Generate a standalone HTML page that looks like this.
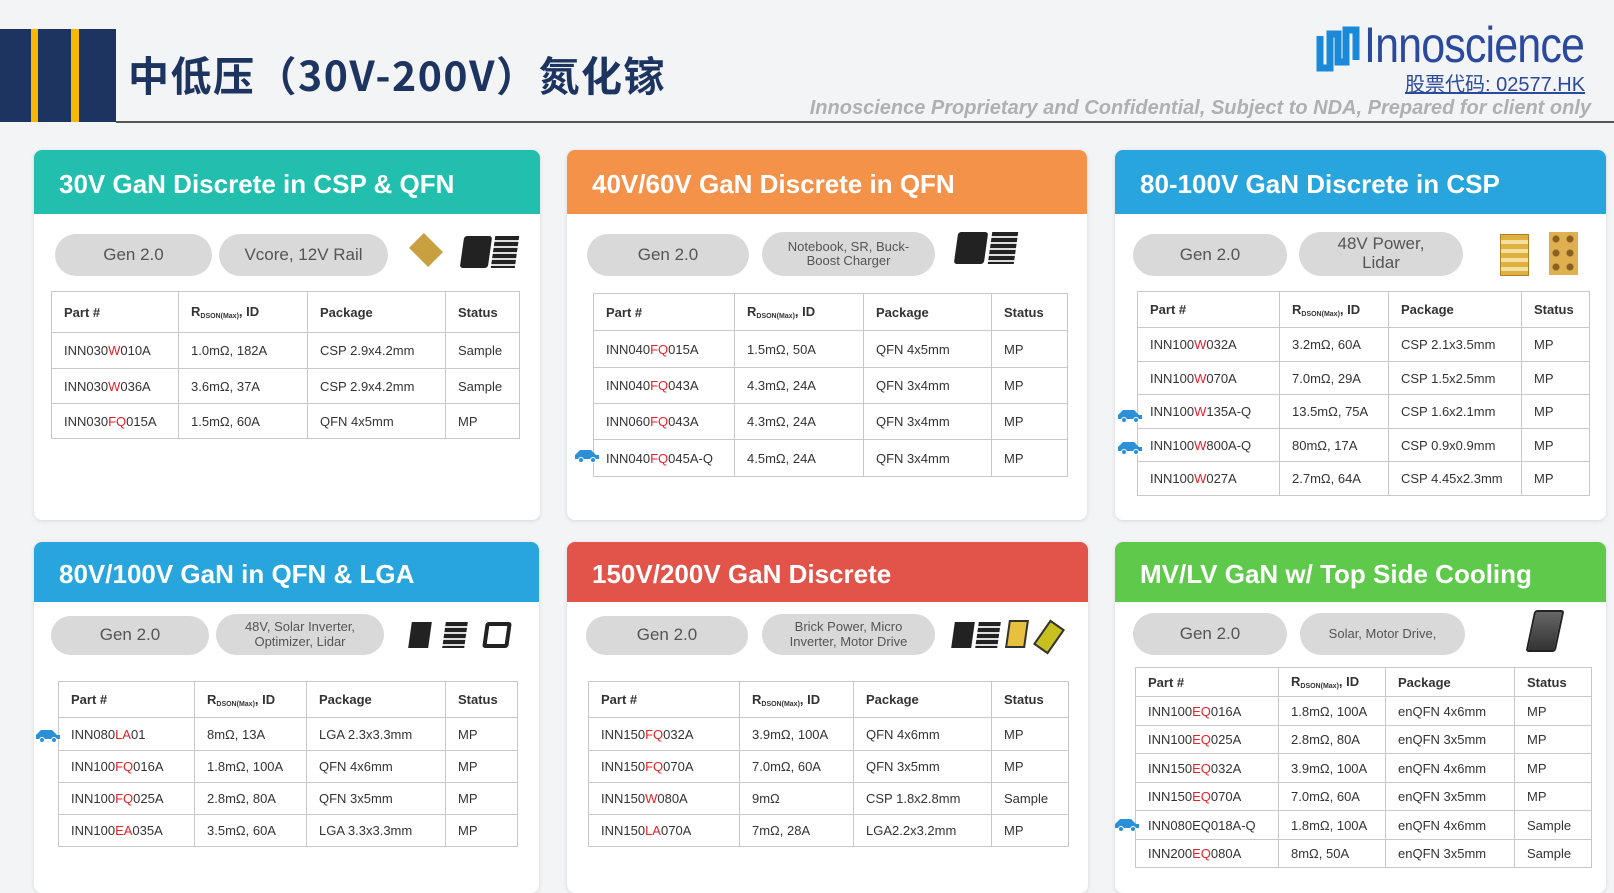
<!DOCTYPE html>
<html><head><meta charset="utf-8"><style>
*{margin:0;padding:0;box-sizing:border-box}
body{width:1614px;height:893px;background:#f3f4f6;position:relative;overflow:hidden;font-family:"Liberation Sans","Noto Sans CJK SC",sans-serif}
.a{position:absolute}
.card{position:absolute;background:#fff;border-radius:8px;box-shadow:0 1px 4px rgba(0,0,0,.12);overflow:hidden}
.hd{height:64px;color:#fff;font-weight:bold;font-size:26px;padding:19px 0 0 25px;white-space:nowrap}
.pill{position:absolute;background:#d9d9d9;border-radius:22px;color:#555;display:flex;align-items:center;justify-content:center;text-align:center;font-size:17px;line-height:1.1}
.pill.s{font-size:13px}
table{position:absolute;border-collapse:collapse;font-size:13px;color:#333;background:#fff}
td{border:1.5px solid #c8c8c8;padding-left:12px;white-space:nowrap}
tr:first-child td{font-weight:bold;font-size:13px}
.r{color:#e8202a}
sub{font-size:7px;vertical-align:-2px;font-weight:bold}
.car{position:absolute;width:26px;height:16px}
</style></head><body>
<!-- header -->
<div class="a" style="left:0;top:29px;width:116px;height:93px;background:#1d3461"></div>
<div class="a" style="left:31px;top:29px;width:7px;height:93px;background:#f6b800"></div>
<div class="a" style="left:71px;top:29px;width:8px;height:93px;background:#f6b800"></div>
<div class="a" style="left:116px;top:121px;width:1498px;height:2px;background:#555"></div>
<div class="a" style="left:128px;top:43px;font-size:41px;font-weight:bold;color:#1d3461;font-family:'Noto Sans CJK SC','Liberation Sans',sans-serif;letter-spacing:1.5px;white-space:nowrap">中低压（30V-200V）氮化镓</div>
<svg class="a" style="left:1316px;top:24px" width="44" height="48" viewBox="0 0 44 48"><path d="M4 12 V44 H14 V10 H22 V38 H30 V6 H40 V36" fill="none" stroke="#1a8ad8" stroke-width="7"/></svg>
<div class="a" style="left:1364px;top:16px;font-size:50px;color:#2b4a9e;letter-spacing:-1px;white-space:nowrap;transform:scaleX(0.86);transform-origin:left top">Innoscience</div>
<div class="a" style="left:1405px;top:68px;font-size:20px;color:#2b4a9e;text-decoration:underline;white-space:nowrap">股票代码: 02577.HK</div>
<div class="a" style="right:23px;top:97px;font-size:20px;color:#b0b0b0;font-style:italic;font-weight:bold;white-space:nowrap">Innoscience Proprietary and Confidential, Subject to NDA, Prepared for client only</div>

<!-- card 1 -->
<div class="card" style="left:34px;top:150px;width:506px;height:370px"><div class="hd" style="background:#22bfae">30V GaN Discrete in CSP &amp; QFN</div></div>
<div class="pill" style="left:55px;top:234px;width:157px;height:42px">Gen 2.0</div>
<div class="pill" style="left:219px;top:234px;width:169px;height:42px">Vcore, 12V Rail</div>
<div class="a" style="left:408px;top:236px;width:36px;height:28px;background:#c8a040;transform:rotate(45deg) scale(.75)"></div>
<div class="a" style="left:462px;top:236px;width:28px;height:32px;background:#222;transform:skewX(-8deg);border-radius:3px"></div>
<div class="a" style="left:493px;top:236px;width:24px;height:32px;background:repeating-linear-gradient(#222 0 4px,#ddd 4px 6px);transform:skewX(-8deg)"></div>
<table style="left:51px;top:291px;width:469px">
<tr style="height:41px"><td style="width:127px">Part #</td><td style="width:129px">R<sub>DSON(Max)</sub>, ID</td><td style="width:138px">Package</td><td>Status</td></tr>
<tr style="height:36px"><td>INN030<span class="r">W</span>010A</td><td>1.0mΩ, 182A</td><td>CSP 2.9x4.2mm</td><td>Sample</td></tr>
<tr style="height:35px"><td>INN030<span class="r">W</span>036A</td><td>3.6mΩ, 37A</td><td>CSP 2.9x4.2mm</td><td>Sample</td></tr>
<tr style="height:35px"><td>INN030<span class="r">FQ</span>015A</td><td>1.5mΩ, 60A</td><td>QFN 4x5mm</td><td>MP</td></tr>
</table>

<!-- card 2 -->
<div class="card" style="left:567px;top:150px;width:520px;height:370px"><div class="hd" style="background:#f4924a">40V/60V GaN Discrete in QFN</div></div>
<div class="pill" style="left:587px;top:234px;width:162px;height:42px">Gen 2.0</div>
<div class="pill s" style="left:762px;top:232px;width:173px;height:44px">Notebook, SR, Buck-<br>Boost Charger</div>
<div class="a" style="left:956px;top:232px;width:30px;height:32px;background:#222;transform:skewX(-8deg);border-radius:3px"></div>
<div class="a" style="left:990px;top:232px;width:26px;height:32px;background:repeating-linear-gradient(#222 0 4px,#ddd 4px 6px);transform:skewX(-8deg)"></div>
<table style="left:593px;top:293px;width:475px">
<tr style="height:37px"><td style="width:141px">Part #</td><td style="width:129px">R<sub>DSON(Max)</sub>, ID</td><td style="width:128px">Package</td><td>Status</td></tr>
<tr style="height:37px"><td>INN040<span class="r">FQ</span>015A</td><td>1.5mΩ, 50A</td><td>QFN 4x5mm</td><td>MP</td></tr>
<tr style="height:36px"><td>INN040<span class="r">FQ</span>043A</td><td>4.3mΩ, 24A</td><td>QFN 3x4mm</td><td>MP</td></tr>
<tr style="height:36px"><td>INN060<span class="r">FQ</span>043A</td><td>4.3mΩ, 24A</td><td>QFN 3x4mm</td><td>MP</td></tr>
<tr style="height:37px"><td>INN040<span class="r">FQ</span>045A-Q</td><td>4.5mΩ, 24A</td><td>QFN 3x4mm</td><td>MP</td></tr>
</table>

<!-- card 3 -->
<div class="card" style="left:1115px;top:150px;width:491px;height:370px"><div class="hd" style="background:#27a5dc">80-100V GaN Discrete in CSP</div></div>
<div class="pill" style="left:1133px;top:234px;width:154px;height:42px">Gen 2.0</div>
<div class="pill" style="left:1299px;top:232px;width:164px;height:44px">48V Power,<br>Lidar</div>
<div class="a" style="left:1500px;top:234px;width:29px;height:42px;background:repeating-linear-gradient(#e0b040 0 5px,#f4e0a0 5px 9px);border:1px solid #b08020"></div>
<div class="a" style="left:1549px;top:232px;width:29px;height:43px;background:radial-gradient(circle,#8a6020 3px,transparent 4px) 0 0/14px 14px,#e0b050"></div>
<table style="left:1137px;top:291px;width:453px">
<tr style="height:36px"><td style="width:142px">Part #</td><td style="width:109px">R<sub>DSON(Max)</sub>, ID</td><td style="width:133px">Package</td><td>Status</td></tr>
<tr style="height:34px"><td>INN100<span class="r">W</span>032A</td><td>3.2mΩ, 60A</td><td>CSP 2.1x3.5mm</td><td>MP</td></tr>
<tr style="height:33px"><td>INN100<span class="r">W</span>070A</td><td>7.0mΩ, 29A</td><td>CSP 1.5x2.5mm</td><td>MP</td></tr>
<tr style="height:34px"><td>INN100<span class="r">W</span>135A-Q</td><td>13.5mΩ, 75A</td><td>CSP 1.6x2.1mm</td><td>MP</td></tr>
<tr style="height:33px"><td>INN100<span class="r">W</span>800A-Q</td><td>80mΩ, 17A</td><td>CSP 0.9x0.9mm</td><td>MP</td></tr>
<tr style="height:34px"><td>INN100<span class="r">W</span>027A</td><td>2.7mΩ, 64A</td><td>CSP 4.45x2.3mm</td><td>MP</td></tr>
</table>

<!-- card 4 -->
<div class="card" style="left:34px;top:542px;width:505px;height:351px"><div class="hd" style="background:#27a5dc;height:60px;padding-top:17px">80V/100V GaN in QFN &amp; LGA</div></div>
<div class="pill" style="left:51px;top:616px;width:158px;height:39px">Gen 2.0</div>
<div class="pill s" style="left:216px;top:614px;width:168px;height:41px">48V, Solar Inverter,<br>Optimizer, Lidar</div>
<div class="a" style="left:410px;top:622px;width:20px;height:26px;background:#222;transform:skewX(-8deg)"></div>
<div class="a" style="left:444px;top:622px;width:22px;height:26px;background:repeating-linear-gradient(#222 0 4px,#ddd 4px 6px);transform:skewX(-8deg)"></div>
<div class="a" style="left:484px;top:622px;width:26px;height:26px;border:4px solid #222;border-radius:3px;transform:skewX(-8deg)"></div>
<table style="left:58px;top:681px;width:460px">
<tr style="height:36px"><td style="width:136px">Part #</td><td style="width:112px">R<sub>DSON(Max)</sub>, ID</td><td style="width:139px">Package</td><td>Status</td></tr>
<tr style="height:33px"><td>INN080<span class="r">LA</span>01</td><td>8mΩ, 13A</td><td>LGA 2.3x3.3mm</td><td>MP</td></tr>
<tr style="height:32px"><td>INN100<span class="r">FQ</span>016A</td><td>1.8mΩ, 100A</td><td>QFN 4x6mm</td><td>MP</td></tr>
<tr style="height:32px"><td>INN100<span class="r">FQ</span>025A</td><td>2.8mΩ, 80A</td><td>QFN 3x5mm</td><td>MP</td></tr>
<tr style="height:32px"><td>INN100<span class="r">EA</span>035A</td><td>3.5mΩ, 60A</td><td>LGA 3.3x3.3mm</td><td>MP</td></tr>
</table>

<!-- card 5 -->
<div class="card" style="left:567px;top:542px;width:521px;height:351px"><div class="hd" style="background:#e2534a;height:60px;padding-top:17px">150V/200V GaN Discrete</div></div>
<div class="pill" style="left:586px;top:616px;width:162px;height:39px">Gen 2.0</div>
<div class="pill s" style="left:762px;top:614px;width:173px;height:41px">Brick Power, Micro<br>Inverter, Motor Drive</div>
<div class="a" style="left:953px;top:622px;width:20px;height:26px;background:#222;transform:skewX(-8deg)"></div>
<div class="a" style="left:977px;top:622px;width:22px;height:26px;background:repeating-linear-gradient(#222 0 4px,#ddd 4px 6px);transform:skewX(-8deg)"></div>
<div class="a" style="left:1007px;top:620px;width:20px;height:28px;background:#e8c040;border:2px solid #333;transform:skewX(-8deg)"></div>
<div class="a" style="left:1040px;top:622px;width:18px;height:30px;background:#c8c020;border:2px solid #333;transform:rotate(35deg)"></div>
<table style="left:588px;top:681px;width:481px">
<tr style="height:36px"><td style="width:151px">Part #</td><td style="width:114px">R<sub>DSON(Max)</sub>, ID</td><td style="width:138px">Package</td><td>Status</td></tr>
<tr style="height:33px"><td>INN150<span class="r">FQ</span>032A</td><td>3.9mΩ, 100A</td><td>QFN 4x6mm</td><td>MP</td></tr>
<tr style="height:32px"><td>INN150<span class="r">FQ</span>070A</td><td>7.0mΩ, 60A</td><td>QFN 3x5mm</td><td>MP</td></tr>
<tr style="height:32px"><td>INN150<span class="r">W</span>080A</td><td>9mΩ</td><td>CSP 1.8x2.8mm</td><td>Sample</td></tr>
<tr style="height:32px"><td>INN150<span class="r">LA</span>070A</td><td>7mΩ, 28A</td><td>LGA2.2x3.2mm</td><td>MP</td></tr>
</table>

<!-- card 6 -->
<div class="card" style="left:1115px;top:542px;width:491px;height:351px"><div class="hd" style="background:#5ec94a;height:60px;padding-top:17px">MV/LV GaN w/ Top Side Cooling</div></div>
<div class="pill" style="left:1133px;top:613px;width:154px;height:42px">Gen 2.0</div>
<div class="pill s" style="left:1300px;top:613px;width:165px;height:42px">Solar, Motor Drive,</div>
<div class="a" style="left:1530px;top:610px;width:30px;height:42px;background:linear-gradient(#666,#333);border:2px solid #222;border-radius:3px;transform:skewX(-12deg)"></div>
<table style="left:1135px;top:667px;width:457px">
<tr style="height:29px"><td style="width:143px">Part #</td><td style="width:107px">R<sub>DSON(Max)</sub>, ID</td><td style="width:129px">Package</td><td>Status</td></tr>
<tr style="height:29px"><td>INN100<span class="r">EQ</span>016A</td><td>1.8mΩ, 100A</td><td>enQFN 4x6mm</td><td>MP</td></tr>
<tr style="height:28px"><td>INN100<span class="r">EQ</span>025A</td><td>2.8mΩ, 80A</td><td>enQFN 3x5mm</td><td>MP</td></tr>
<tr style="height:29px"><td>INN150<span class="r">EQ</span>032A</td><td>3.9mΩ, 100A</td><td>enQFN 4x6mm</td><td>MP</td></tr>
<tr style="height:28px"><td>INN150<span class="r">EQ</span>070A</td><td>7.0mΩ, 60A</td><td>enQFN 3x5mm</td><td>MP</td></tr>
<tr style="height:29px"><td>INN080EQ018A-Q</td><td>1.8mΩ, 100A</td><td>enQFN 4x6mm</td><td>Sample</td></tr>
<tr style="height:28px"><td>INN200<span class="r">EQ</span>080A</td><td>8mΩ, 50A</td><td>enQFN 3x5mm</td><td>Sample</td></tr>
</table>

<!-- car icons -->
<svg class="car" style="left:574px;top:447px" viewBox="0 0 26 16"><path d="M1 12 V8 L6 3 H17 L22 8 H25 V12 Z" fill="#2a90d8"/><circle cx="7" cy="13" r="2.5" fill="#2a90d8" stroke="#fff"/><circle cx="19" cy="13" r="2.5" fill="#2a90d8" stroke="#fff"/></svg>
<svg class="car" style="left:1117px;top:407px" viewBox="0 0 26 16"><path d="M1 12 V8 L6 3 H17 L22 8 H25 V12 Z" fill="#2a90d8"/><circle cx="7" cy="13" r="2.5" fill="#2a90d8" stroke="#fff"/><circle cx="19" cy="13" r="2.5" fill="#2a90d8" stroke="#fff"/></svg>
<svg class="car" style="left:1117px;top:439px" viewBox="0 0 26 16"><path d="M1 12 V8 L6 3 H17 L22 8 H25 V12 Z" fill="#2a90d8"/><circle cx="7" cy="13" r="2.5" fill="#2a90d8" stroke="#fff"/><circle cx="19" cy="13" r="2.5" fill="#2a90d8" stroke="#fff"/></svg>
<svg class="car" style="left:35px;top:727px" viewBox="0 0 26 16"><path d="M1 12 V8 L6 3 H17 L22 8 H25 V12 Z" fill="#2a90d8"/><circle cx="7" cy="13" r="2.5" fill="#2a90d8" stroke="#fff"/><circle cx="19" cy="13" r="2.5" fill="#2a90d8" stroke="#fff"/></svg>
<svg class="car" style="left:1114px;top:816px" viewBox="0 0 26 16"><path d="M1 12 V8 L6 3 H17 L22 8 H25 V12 Z" fill="#2a90d8"/><circle cx="7" cy="13" r="2.5" fill="#2a90d8" stroke="#fff"/><circle cx="19" cy="13" r="2.5" fill="#2a90d8" stroke="#fff"/></svg>
</body></html>
